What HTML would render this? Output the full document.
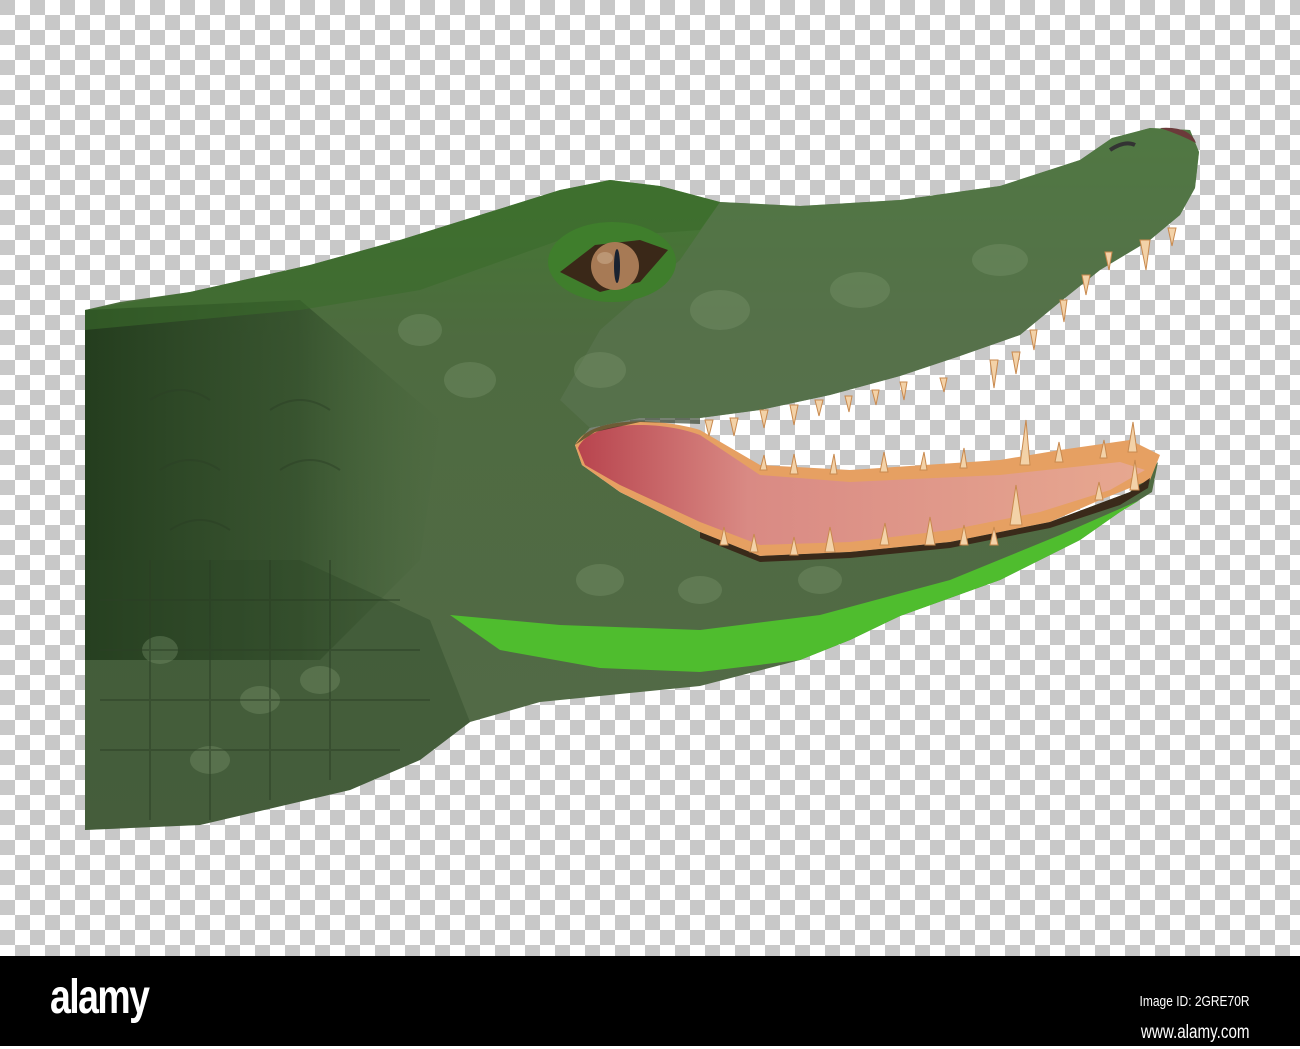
<!DOCTYPE html>
<html><head><meta charset="utf-8"><style>
html,body{margin:0;padding:0;width:1300px;height:1046px;overflow:hidden;background:#fff}
.bg{position:absolute;left:0;top:0;width:1300px;height:956px;
background-color:#fff;
background-image:
linear-gradient(45deg,#c8c8c8 25%,transparent 25%,transparent 75%,#c8c8c8 75%),
linear-gradient(45deg,#c8c8c8 25%,transparent 25%,transparent 75%,#c8c8c8 75%);
background-size:30px 30px;background-position:15px 0,0 15px;}
.bar{position:absolute;left:0;top:956px;width:1300px;height:90px;background:#000;color:#fff;font-family:"Liberation Sans",sans-serif}
.logo{position:absolute;left:50px;top:14px;font-size:48px;font-weight:bold;letter-spacing:-2px;transform:scaleX(.78);transform-origin:left}
.id{position:absolute;right:50px;top:30px;font-size:15px;text-align:right;line-height:31px;transform:scaleX(.8);transform-origin:right}
svg{position:absolute;left:0;top:0}
</style></head><body>
<div class="bg"></div>
<svg width="1300" height="956" viewBox="0 0 1300 956">
<defs>
<linearGradient id="g1" x1="0" y1="0" x2="0" y2="1">
<stop offset="0" stop-color="#3f7c2c"/><stop offset=".3" stop-color="#4e6b40"/><stop offset="1" stop-color="#536a48"/></linearGradient>
<linearGradient id="dk" x1="0" y1="0" x2="1" y2="0">
<stop offset="0" stop-color="#243d1e"/><stop offset=".6" stop-color="#2f4a28" stop-opacity=".7"/><stop offset="1" stop-color="#3f6035" stop-opacity="0"/></linearGradient>
<linearGradient id="tg" x1="0" y1="0" x2="1" y2="0">
<stop offset="0" stop-color="#b8444e"/><stop offset=".3" stop-color="#d98a84"/><stop offset="1" stop-color="#e7a890"/></linearGradient>
</defs>
<path fill="url(#g1)" d="M85,310 L120,302 L190,292 L310,265 L400,240 L480,215 L560,190 L610,180 L660,186 L720,202 L800,206 L900,200 L1000,186 L1080,160 L1112,138 L1150,128 L1190,130 L1199,152 L1195,188 L1180,215 L1150,240 L1100,270 L1060,302 L1020,335 L960,356 L900,376 L830,395 L760,410 L700,418 L640,418 L590,428 L575,445 L582,465 L620,492 L700,532 L760,556 L850,552 L950,542 L1050,522 L1130,492 L1158,462 L1152,492 L1120,512 L1080,540 L1000,580 L900,616 L850,640 L800,660 L700,686 L600,696 L540,702 L470,722 L420,760 L350,790 L200,825 L85,830 Z"/>
<path fill="#5c7552" opacity=".6" d="M720,202 L800,206 L900,200 L1000,186 L1080,160 L1112,138 L1150,128 L1190,130 L1199,152 L1195,188 L1180,215 L1150,240 L1100,270 L1060,302 L1020,335 L960,356 L900,376 L830,395 L760,410 L700,418 L640,418 L590,428 L560,400 L600,330 L680,260Z"/>
<path fill="url(#dk)" d="M85,310 L300,300 L440,420 L420,560 L320,660 L85,660 Z"/>
<path fill="#2c4526" opacity=".35" d="M85,560 L300,560 L430,620 L470,722 L420,760 L350,790 L200,825 L85,830Z"/>
<path fill="#3a6a2c" d="M85,310 L190,292 L310,265 L400,240 L480,215 L560,190 L610,180 L660,186 L720,202 L700,230 L560,240 L420,290 L300,310 L85,330Z" opacity=".6"/>
<!-- lower jaw green band -->
<path fill="#4fbd2e" d="M450,615 L560,625 L700,630 L820,615 L950,580 L1060,535 L1140,500 L1120,512 L1080,540 L1000,580 L900,616 L850,640 L800,660 L700,672 L600,668 L500,650 Z"/>
<!-- tongue/gums -->
<path fill="#e6a062" d="M575,445 C590,415 660,418 700,430 L760,465 L850,470 L1000,460 L1060,450 L1130,440 L1160,455 L1150,480 L1100,500 L1050,522 L950,542 L850,552 L760,556 L700,532 L620,492 L582,465Z"/>
<path fill="url(#tg)" d="M578,448 C590,420 660,420 700,435 L760,475 L850,482 L1000,475 L1120,462 L1145,470 L1110,490 L1040,512 L950,530 L850,542 L760,545 L700,522 L620,485 L585,465Z"/>
<path fill="#3a2a1a" d="M700,532 L760,556 L850,552 L950,542 L1050,522 L1130,492 L1150,478 L1148,488 L1120,505 L1050,528 L950,548 L850,558 L760,562 L700,538Z"/>
<path fill="#1e2e18" opacity=".6" d="M575,445 L590,428 L640,418 L700,418 L700,424 L640,422 L595,432Z"/>
<!-- teeth -->
<g fill="#f3d2a8" stroke="#c8894e" stroke-width="1">
<path d="M990,360 l8,0 l-4,28z"/><path d="M1012,352 l8,0 l-4,22z"/><path d="M1030,330 l7,0 l-3,20z"/><path d="M1060,300 l7,0 l-3,22z"/><path d="M1082,275 l8,0 l-4,20z"/><path d="M1105,252 l7,0 l-3,18z"/><path d="M1140,240 l10,0 l-4,30z"/><path d="M1168,228 l8,0 l-4,18z"/>
<path d="M940,378 l7,0 l-3,14z"/><path d="M900,382 l7,0 l-3,18z"/><path d="M872,390 l7,0 l-3,15z"/><path d="M845,396 l7,0 l-3,16z"/><path d="M815,400 l8,0 l-4,16z"/><path d="M790,405 l8,0 l-4,20z"/><path d="M760,410 l8,0 l-4,18z"/><path d="M730,418 l8,0 l-4,18z"/><path d="M705,420 l8,0 l-4,16z"/>
<path d="M1020,465 l10,0 l-4,-45z"/><path d="M1055,462 l8,0 l-4,-20z"/><path d="M1128,452 l9,0 l-4,-30z"/><path d="M1100,458 l7,0 l-3,-18z"/><path d="M760,470 l7,0 l-3,-15z"/><path d="M830,474 l7,0 l-3,-20z"/><path d="M880,472 l8,0 l-4,-20z"/><path d="M920,470 l7,0 l-3,-18z"/><path d="M960,468 l7,0 l-3,-20z"/><path d="M790,474 l8,0 l-4,-20z"/>
<path d="M1010,525 l12,0 l-6,-40z"/><path d="M1130,490 l9,0 l-4,-30z"/><path d="M1095,500 l8,0 l-4,-18z"/><path d="M720,545 l8,0 l-4,-18z"/><path d="M750,552 l8,0 l-4,-18z"/><path d="M790,555 l8,0 l-4,-18z"/><path d="M825,552 l10,0 l-5,-25z"/><path d="M880,545 l9,0 l-4,-22z"/><path d="M925,545 l10,0 l-5,-28z"/><path d="M960,545 l8,0 l-4,-20z"/><path d="M990,545 l8,0 l-4,-18z"/>
</g>
<!-- scales hints -->
<g fill="#7d9870" opacity=".35">
<ellipse cx="260" cy="700" rx="20" ry="14"/><ellipse cx="210" cy="760" rx="20" ry="14"/><ellipse cx="320" cy="680" rx="20" ry="14"/><ellipse cx="160" cy="650" rx="18" ry="14"/><ellipse cx="600" cy="580" rx="24" ry="16"/><ellipse cx="700" cy="590" rx="22" ry="14"/><ellipse cx="820" cy="580" rx="22" ry="14"/><ellipse cx="720" cy="310" rx="30" ry="20"/><ellipse cx="860" cy="290" rx="30" ry="18"/><ellipse cx="1000" cy="260" rx="28" ry="16"/><ellipse cx="600" cy="370" rx="26" ry="18"/><ellipse cx="470" cy="380" rx="26" ry="18"/><ellipse cx="420" cy="330" rx="22" ry="16"/>
</g>
<g stroke="#2b3f25" stroke-width="2" fill="none" opacity=".5">
<path d="M150,400 q30,-20 60,0 M160,470 q30,-20 60,0 M270,410 q30,-20 60,0 M280,470 q30,-20 60,0 M170,530 q30,-20 60,0"/>
<path d="M100,600 h300 M100,650 h320 M100,700 h330 M100,750 h300 M150,560 v260 M210,560 v260 M270,560 v240 M330,560 v220"/>
</g>
<path d="M1110,150 q15,-10 25,-5" stroke="#333" stroke-width="4" fill="none"/>
<path d="M1160,128 q30,-2 36,15 q-15,-8 -36,-15z" fill="#6b3a3a"/>
<!-- eye -->
<ellipse cx="612" cy="262" rx="64" ry="40" fill="#3f7e2c"/>
<path d="M560,272 L595,245 L640,240 L668,250 L640,282 L600,292Z" fill="#3a2818"/>
<circle cx="615" cy="266" r="24" fill="#a77a55"/>
<ellipse cx="617" cy="266" rx="3" ry="17" fill="#1a2230"/>
<ellipse cx="605" cy="258" rx="8" ry="6" fill="#c8a888" opacity=".6"/>
</svg>
<div class="bar"><div class="logo">alamy</div><div class="id">Image ID: 2GRE70R<br><span style="font-size:19px">www.alamy.com</span></div></div>
</body></html>
